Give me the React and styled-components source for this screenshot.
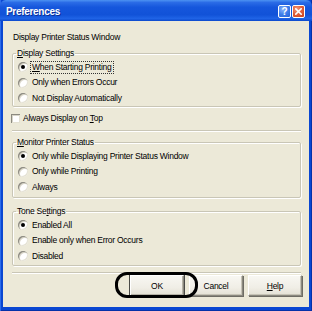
import React from "react";
import styled, { createGlobalStyle, css } from "styled-components";

const Global = createGlobalStyle`
  html, body { margin: 0; padding: 0; background: #ECE9D8; }
  body { width: 312px; height: 311px; overflow: hidden; }
  * { box-sizing: border-box; }
`;

const FONT = `"Liberation Sans", Arial, sans-serif`;

const Window = styled.div`
  width: 312px;
  height: 311px;
  display: flex;
  flex-direction: column;
  background: #0A47D2;
  box-shadow: inset 1px 0 0 #2C6CEB, inset -1px 0 0 #0631A8, inset 0 -1px 0 #0631A8;
  font-family: ${FONT};
  font-size: 8.5px;
  letter-spacing: -0.25px;
  color: #000;
`;

const TitleBar = styled.div`
  height: 21px;
  flex: none;
  display: flex;
  align-items: center;
  justify-content: space-between;
  padding: 0 7px 0 6px;
  background: linear-gradient(
    to bottom,
    #4C92F2 0%,
    #2A6BE6 12%,
    #1556DC 35%,
    #1152D8 70%,
    #1F63E6 88%,
    #0C49CC 100%
  );
  border-radius: 6px 6px 0 0;
`;

const Title = styled.span`
  color: #fff;
  font-weight: bold;
  font-size: 10px;
  letter-spacing: -0.3px;
  text-shadow: 1px 1px 0 #0A2F94;
  margin-top: 1px;
`;

const Caps = styled.div`
  display: flex;
  gap: 1px;
  margin-top: 2px;
`;

const CapButton = styled.div`
  width: 13px;
  height: 13px;
  border: 1px solid #fff;
  border-radius: 2px;
  display: flex;
  align-items: center;
  justify-content: center;
  color: #fff;
  font-weight: bold;
  font-size: 10px;
  letter-spacing: 0;
  ${(p) =>
    p.$kind === "close"
      ? css`
          background: radial-gradient(circle at 35% 30%, #F39A7C 0%, #E2613C 45%, #C9401C 100%);
        `
      : css`
          background: radial-gradient(circle at 35% 30%, #8BB4FA 0%, #3F7EEA 50%, #2460D8 100%);
        `}
`;

const Body = styled.div`
  flex: 1;
  margin: 0 3px 4px 3px;
  background: #ECE9D8;
  padding: 10px 8px 0 9px;
  display: flex;
  flex-direction: column;
`;

const Heading = styled.div`
  line-height: 12px;
  height: 12px;
  padding-left: 1px;
`;

const Group = styled.fieldset`
  margin: ${(p) => p.$top}px 0 0 0;
  padding: 0.5px 0 ${(p) => p.$bottom}px 5px;
  border: 1px solid #C9C6B6;
  border-radius: 2px;
  box-shadow: 1px 1px 0 #FFFFFF, inset 1px 1px 0 #FFFFFF;
  min-width: 0;
`;

const Legend = styled.legend`
  padding: 0 1px;
  margin-left: -2px;
  line-height: 12px;
  height: 12px;
`;

const Row = styled.label`
  display: flex;
  align-items: center;
  height: 15.5px;
  white-space: nowrap;
`;

const RadioDot = styled.span`
  width: 10px;
  height: 10px;
  flex: none;
  border-radius: 50%;
  background: #fff;
  box-shadow: inset 1px 1px 0 #8C8A80, inset -1px -1px 0 #E4E1D3, inset 2px 2px 0 #D8D5C8;
  margin-right: 4px;
  display: flex;
  align-items: center;
  justify-content: center;
  &::after {
    content: "";
    width: 4px;
    height: 4px;
    border-radius: 50%;
    background: ${(p) => (p.$on ? "#000" : "transparent")};
  }
`;

const Text = styled.span`
  padding: 0 1px;
  margin-left: -1px;
  line-height: 11px;
  outline: ${(p) => (p.$focus ? "1px dotted #333" : "none")};
  outline-offset: 0;
`;

const U = styled.span`
  text-decoration: underline;
  text-underline-offset: 1px;
`;

const CheckRow = styled.label`
  display: flex;
  align-items: center;
  height: 13px;
  margin: 4.5px 0 0 -1px;
  white-space: nowrap;
`;

const CheckBox = styled.span`
  width: 9px;
  height: 9px;
  flex: none;
  background: #fff;
  box-shadow: inset 1px 1px 0 #8C8A80, inset -1px -1px 0 #E4E1D3, inset 2px 2px 0 #D8D5C8;
  margin-right: 3px;
`;

const Separator = styled.div`
  height: 2px;
  flex: none;
  margin-top: ${(p) => p.$top}px;
  border-top: 1px solid #C9C6B6;
  border-bottom: 1px solid #FFFFFF;
`;

const ButtonRow = styled.div`
  display: flex;
  justify-content: flex-end;
  gap: 5px;
  margin: 1px -1px 0 0;
`;

const ButtonSlot = styled.div`
  position: relative;
`;

const Button = styled.div`
  width: 54px;
  height: 21px;
  display: flex;
  align-items: center;
  justify-content: center;
  background: linear-gradient(to bottom, #F8F7F2 0%, #F0EEE6 60%, #E4E1D5 100%);
  border: 1px solid;
  border-color: #FFFFFF #8A887E #8A887E #FFFFFF;
  box-shadow: ${(p) =>
    p.$default
      ? "0 0 0 1px #4A4A46, inset -1px -1px 0 #B5B2A6"
      : "1px 1px 0 #6E6C64, inset -1px -1px 0 #C6C3B6"};
`;

const Oval = styled.div`
  position: absolute;
  z-index: 2;
  top: -3px;
  bottom: -2px;
  left: -15px;
  right: -14px;
  border: 3px solid #000;
  border-radius: 12px;
  pointer-events: none;
`;

function Radio({ on, focus, children }) {
  return (
    <Row>
      <RadioDot $on={on} />
      <Text $focus={focus}>{children}</Text>
    </Row>
  );
}

export default function App() {
  return (
    <>
      <Global />
      <Window>
        <TitleBar>
          <Title>Preferences</Title>
          <Caps>
            <CapButton $kind="help">?</CapButton>
            <CapButton $kind="close">
              <svg width="7" height="7" viewBox="0 0 7 7">
                <path d="M0.8 0.8 L6.2 6.2 M6.2 0.8 L0.8 6.2" stroke="#fff" strokeWidth="1.6" strokeLinecap="square" />
              </svg>
            </CapButton>
          </Caps>
        </TitleBar>
        <Body>
          <Heading>Display Printer Status Window</Heading>
          <Group $top={4} $bottom={0}>
            <Legend><U>D</U>isplay Settings</Legend>
            <Radio on focus><U>W</U>hen Starting Printing</Radio>
            <Radio>Only when Errors Occur</Radio>
            <Radio>Not Display Automatically</Radio>
          </Group>
          <CheckRow>
            <CheckBox />
            <span>Always Display on <U>T</U>op</span>
          </CheckRow>
          <Separator $top={5.5} />
          <Group $top={4} $bottom={1.5}>
            <Legend><U>M</U>onitor Printer Status</Legend>
            <Radio on>Only while Displaying Printer Status Window</Radio>
            <Radio>Only while Printing</Radio>
            <Radio>Always</Radio>
          </Group>
          <Group $top={7.5} $bottom={1}>
            <Legend>Tone Se<U>t</U>tings</Legend>
            <Radio on>Enabled All</Radio>
            <Radio>Enable only when Error Occurs</Radio>
            <Radio>Disabled</Radio>
          </Group>
          <Separator $top={6} />
          <ButtonRow>
            <ButtonSlot>
              <Button $default>OK</Button>
              <Oval />
            </ButtonSlot>
            <ButtonSlot>
              <Button>Cancel</Button>
            </ButtonSlot>
            <ButtonSlot>
              <Button><span><U>H</U>elp</span></Button>
            </ButtonSlot>
          </ButtonRow>
        </Body>
      </Window>
    </>
  );
}
